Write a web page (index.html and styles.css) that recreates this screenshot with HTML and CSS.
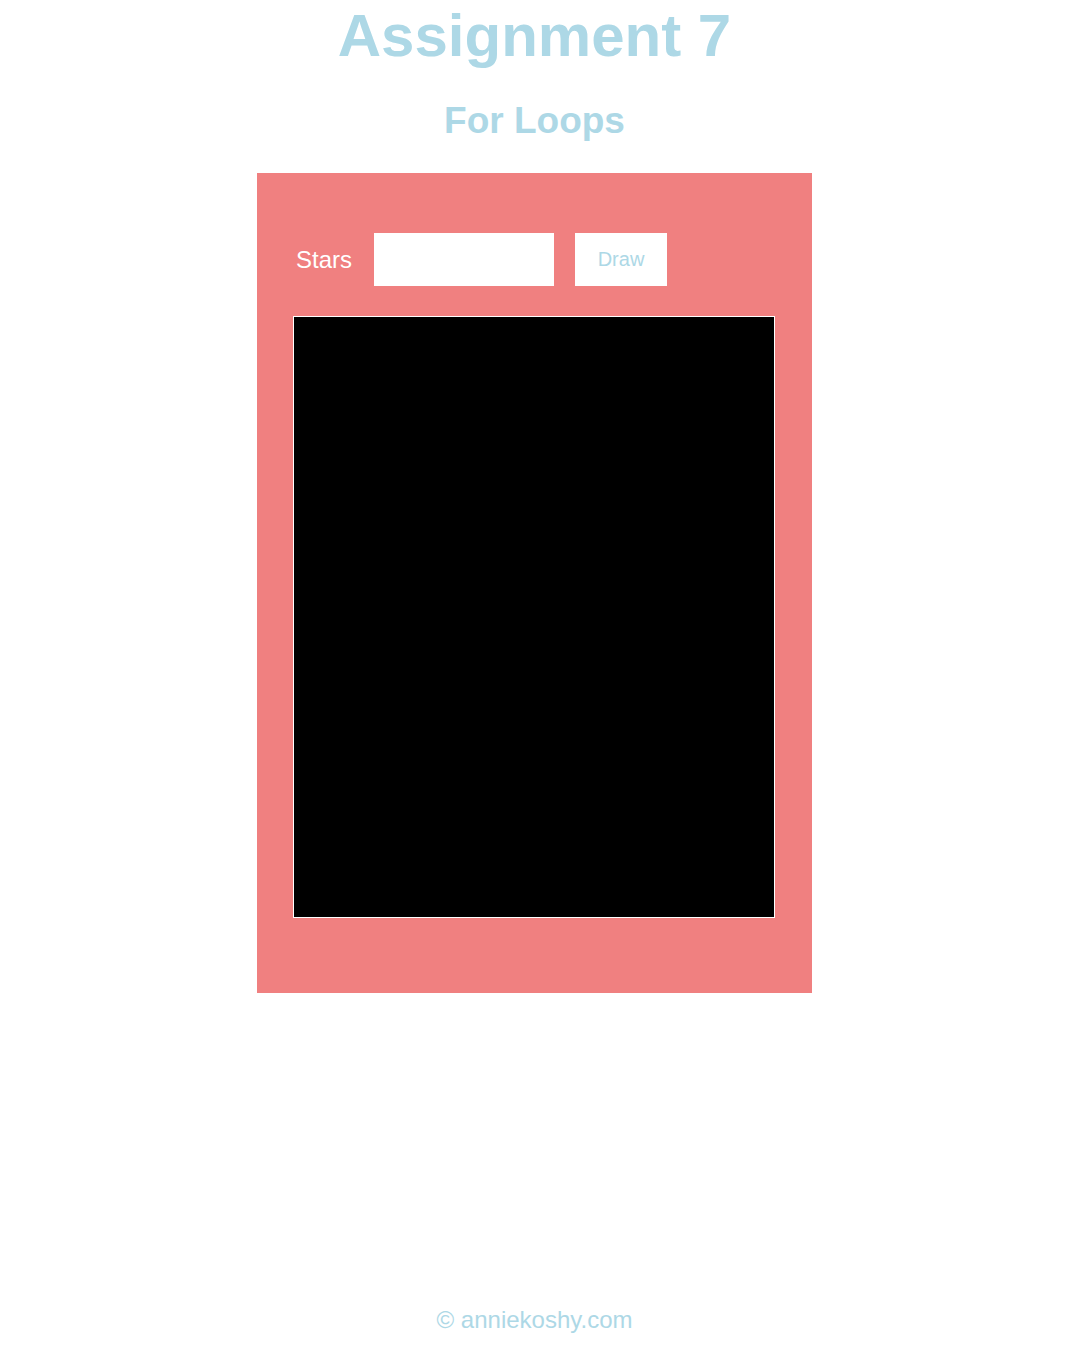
FILE: index.html
```html
<!DOCTYPE html>
<html lang="en">
<head>
<meta charset="utf-8">
<title>Assignment 7 - For Loops</title>
<link rel="stylesheet" href="styles.css">
</head>
<body>
<div class="page">
  <h1 class="title">Assignment 7</h1>
  <h2 class="subtitle">For Loops</h2>
  <section class="panel">
    <form class="controls" onsubmit="return false;">
      <label class="controls-label" for="stars">Stars</label>
      <input class="controls-input" id="stars" type="text">
      <button class="controls-button" type="button">Draw</button>
    </form>
    <canvas class="board" width="480" height="600"></canvas>
  </section>
  <footer class="footer">© anniekoshy.com</footer>
</div>
</body>
</html>
```
FILE: styles.css
```css
html, body {
  margin: 0;
  padding: 0;
  background: #ffffff;
}

.page {
  width: 1069px;
  display: flex;
  flex-direction: column;
  align-items: center;
  font-family: "Liberation Sans", Arial, sans-serif;
  color: #add8e6;
}

.title {
  margin: 0;
  padding-top: 2px;
  font-size: 60px;
  line-height: 67px;
  font-weight: bold;
}

.subtitle {
  margin: 31px 0 0;
  font-size: 37px;
  line-height: 41px;
  font-weight: bold;
}

.panel {
  box-sizing: border-box;
  width: 555px;
  margin-top: 32px;
  padding: 60px 36px 75px;
  background: #f08080;
}

.controls {
  display: flex;
  align-items: center;
  margin: 0 0 30px;
  padding-left: 3px;
}

.controls-label {
  font-size: 24px;
  color: #ffffff;
  margin-right: 22px;
}

.controls-input {
  box-sizing: border-box;
  width: 180px;
  height: 53px;
  border: none;
  padding: 0 8px;
  margin: 0 21px 0 0;
  background: #ffffff;
  font-family: inherit;
  font-size: 20px;
  outline: none;
}

.controls-button {
  box-sizing: border-box;
  width: 92px;
  height: 53px;
  border: none;
  padding: 0;
  margin: 0;
  background: #ffffff;
  color: #add8e6;
  font-family: inherit;
  font-size: 20px;
  cursor: pointer;
}

.board {
  display: block;
  width: 480px;
  height: 600px;
  border: 1px solid #ffffff;
  background: #000000;
}

.footer {
  margin-top: 313px;
  font-size: 24px;
  line-height: 27px;
}
```
